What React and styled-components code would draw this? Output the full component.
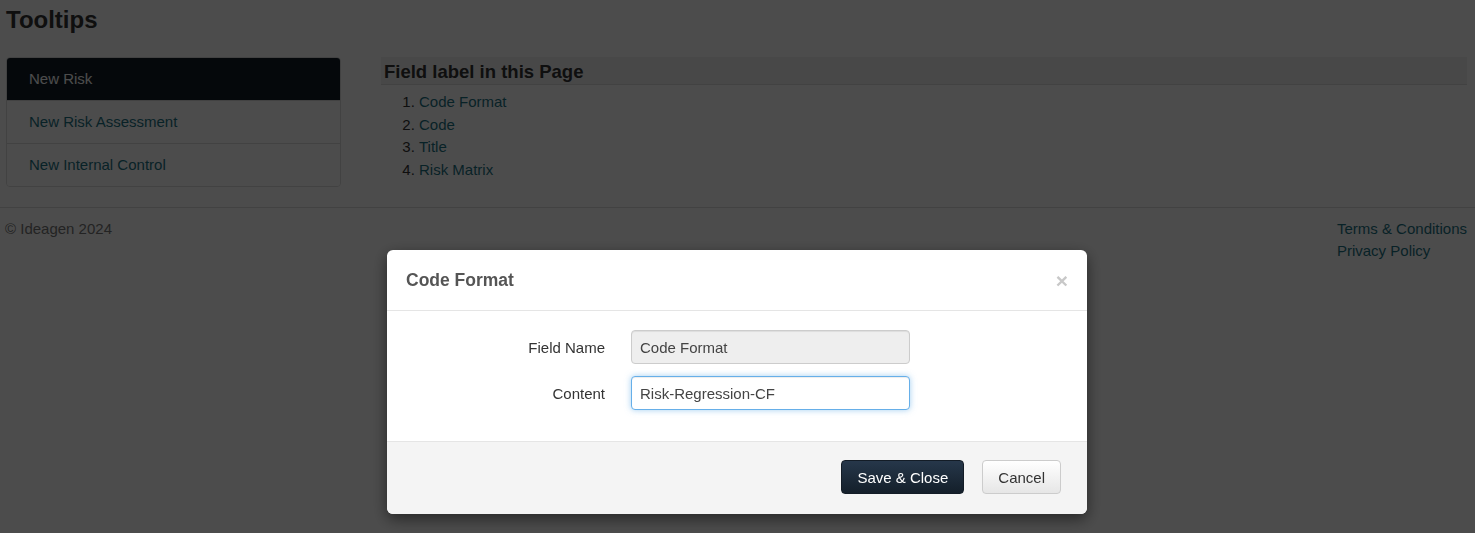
import React from 'react';
import styled, { createGlobalStyle } from 'styled-components';

const GlobalStyle = createGlobalStyle`
  html, body {
    margin: 0;
    padding: 0;
    background: #fff;
    font-family: "Liberation Sans", Arial, sans-serif;
    font-size: 15px;
    color: #333;
  }
  * { box-sizing: border-box; }
`;

const Page = styled.div`
  min-height: 533px;
`;

const Title = styled.h1`
  margin: 0;
  padding: 5px 6px 0;
  font-size: 24px;
  line-height: 30px;
  font-weight: bold;
  color: #333;
`;

const Row = styled.div`
  display: flex;
  gap: 40px;
  padding: 22px 8px 0 6px;
`;

const Sidebar = styled.div`
  width: 335px;
  border: 1px solid #ddd;
  border-radius: 4px;
  overflow: hidden;
  flex-shrink: 0;
  align-self: flex-start;
`;

const SideItem = styled.a`
  display: block;
  padding: 10px 22px;
  line-height: 22px;
  color: ${p => (p.$active ? '#fff' : '#1d7384')};
  background: ${p => (p.$active ? '#111d27' : '#fff')};
  text-decoration: none;
  & + & { border-top: 1px solid #ddd; }
`;

const Main = styled.div`
  flex: 1;
`;

const SectionHead = styled.h2`
  margin: 0;
  padding: 3px 3px 1px;
  font-size: 18.5px;
  line-height: 23px;
  font-weight: bold;
  color: #333;
  background: #f2f2f2;
  border-bottom: 1px solid #ddd;
`;

const FieldList = styled.ol`
  margin: 6px 0 0;
  padding-left: 38px;
  line-height: 22.5px;
`;

const FieldLink = styled.a`
  color: #1d7384;
  text-decoration: none;
`;

const Footer = styled.footer`
  margin-top: 20px;
  border-top: 1px solid #ddd;
  display: flex;
  justify-content: space-between;
  padding: 10px 8px 0 5px;
  line-height: 22px;
`;

const Copy = styled.span`
  color: #777;
`;

const FooterLinks = styled.div`
  display: flex;
  flex-direction: column;
`;

const FooterLink = styled.a`
  color: #1d7384;
  text-decoration: none;
`;

const Backdrop = styled.div`
  position: fixed;
  inset: 0;
  background: rgba(0, 0, 0, 0.7);
`;

const ModalWrap = styled.div`
  position: fixed;
  inset: 0;
  padding: 250px 0 0 387px;
`;

const Modal = styled.div`
  width: 700px;
  background: #fff;
  border-radius: 6px;
  box-shadow: 0 5px 15px rgba(0, 0, 0, 0.5);
  overflow: hidden;
`;

const ModalHeader = styled.div`
  display: flex;
  justify-content: space-between;
  align-items: center;
  height: 61px;
  padding: 0 19px;
  border-bottom: 1px solid #e5e5e5;
`;

const ModalTitle = styled.h4`
  margin: 0;
  font-size: 17.5px;
  font-weight: bold;
  color: #555;
`;

const Close = styled.button`
  border: 0;
  background: none;
  padding: 0;
  font-family: "Liberation Sans", Arial, sans-serif;
  font-size: 21px;
  font-weight: bold;
  color: #c8c8c8;
  line-height: 1;
  cursor: pointer;
`;

const ModalBody = styled.div`
  padding: 19px 0 31px;
  display: flex;
  flex-direction: column;
  gap: 12px;
`;

const FormRow = styled.div`
  display: flex;
  align-items: center;
`;

const Label = styled.label`
  width: 244px;
  text-align: right;
  padding-right: 26px;
  color: #333;
`;

const Input = styled.input`
  width: 279px;
  height: 34px;
  padding: 6px 8px;
  font-family: "Liberation Sans", Arial, sans-serif;
  font-size: 15px;
  color: #444;
  border-radius: 4px;
  border: 1px solid ${p => (p.$focus ? '#66afe9' : '#ccc')};
  background: ${p => (p.readOnly ? '#eee' : '#fff')};
  box-shadow: ${p =>
    p.$focus
      ? 'inset 0 1px 1px rgba(0,0,0,.075), 0 0 6px rgba(102,175,233,.6)'
      : 'inset 0 1px 1px rgba(0,0,0,.075)'};
  outline: none;
`;

const ModalFooter = styled.div`
  display: flex;
  justify-content: flex-end;
  align-items: flex-start;
  gap: 18px;
  height: 73px;
  padding: 18px 26px 0 0;
  background: #f4f4f4;
  border-top: 1px solid #e5e5e5;
`;

const Button = styled.button`
  height: 34px;
  padding: 0 15px;
  font-family: "Liberation Sans", Arial, sans-serif;
  font-size: 15px;
  border-radius: 4px;
  cursor: pointer;
  color: ${p => (p.$primary ? '#fff' : '#333')};
  border: 1px solid ${p => (p.$primary ? '#131c26' : '#ccc')};
  background: ${p =>
    p.$primary
      ? 'linear-gradient(to bottom, #26374a 0%, #141f2a 100%)'
      : 'linear-gradient(to bottom, #ffffff 0%, #e6e6e6 100%)'};
`;

export default function App() {
  return (
    <>
      <GlobalStyle />
      <Page>
        <Title>Tooltips</Title>
        <Row>
          <Sidebar>
            <SideItem $active>New Risk</SideItem>
            <SideItem>New Risk Assessment</SideItem>
            <SideItem>New Internal Control</SideItem>
          </Sidebar>
          <Main>
            <SectionHead>Field label in this Page</SectionHead>
            <FieldList>
              <li><FieldLink>Code Format</FieldLink></li>
              <li><FieldLink>Code</FieldLink></li>
              <li><FieldLink>Title</FieldLink></li>
              <li><FieldLink>Risk Matrix</FieldLink></li>
            </FieldList>
          </Main>
        </Row>
        <Footer>
          <Copy>© Ideagen 2024</Copy>
          <FooterLinks>
            <FooterLink>Terms &amp; Conditions</FooterLink>
            <FooterLink>Privacy Policy</FooterLink>
          </FooterLinks>
        </Footer>
      </Page>
      <Backdrop />
      <ModalWrap>
        <Modal>
          <ModalHeader>
            <ModalTitle>Code Format</ModalTitle>
            <Close>×</Close>
          </ModalHeader>
          <ModalBody>
            <FormRow>
              <Label>Field Name</Label>
              <Input readOnly value="Code Format" />
            </FormRow>
            <FormRow>
              <Label>Content</Label>
              <Input $focus defaultValue="Risk-Regression-CF" />
            </FormRow>
          </ModalBody>
          <ModalFooter>
            <Button $primary>Save &amp; Close</Button>
            <Button>Cancel</Button>
          </ModalFooter>
        </Modal>
      </ModalWrap>
    </>
  );
}
